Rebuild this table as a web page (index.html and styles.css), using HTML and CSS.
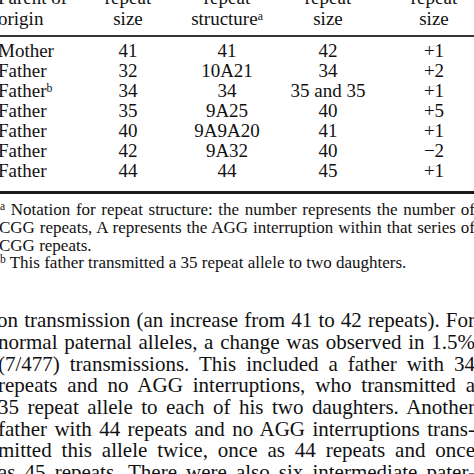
FILE: index.html
```html
<!DOCTYPE html>
<html lang="en">
<head>
<meta charset="utf-8">
<title>Table</title>
<link rel="stylesheet" href="styles.css">
</head>
<body>
<div class="page">
  <table class="data">
    <colgroup>
      <col class="c1"><col class="c2"><col class="c3"><col class="c4"><col class="c5">
    </colgroup>
    <thead>
      <tr class="h1">
        <th class="left">Parent of</th><th>repeat</th><th>repeat</th><th>repeat</th><th>repeat</th>
      </tr>
      <tr class="h2">
        <th class="left">origin</th><th>size</th><th>structure<sup>a</sup></th><th>size</th><th>size</th>
      </tr>
    </thead>
    <tbody>
      <tr class="first"><td class="left">Mother</td><td>41</td><td>41</td><td>42</td><td>+1</td></tr>
      <tr><td class="left">Father</td><td>32</td><td>10A21</td><td>34</td><td>+2</td></tr>
      <tr><td class="left">Father<sup>b</sup></td><td>34</td><td>34</td><td>35 and 35</td><td>+1</td></tr>
      <tr><td class="left">Father</td><td>35</td><td>9A25</td><td>40</td><td>+5</td></tr>
      <tr><td class="left">Father</td><td>40</td><td>9A9A20</td><td>41</td><td>+1</td></tr>
      <tr><td class="left">Father</td><td>42</td><td>9A32</td><td>40</td><td>&minus;2</td></tr>
      <tr class="last"><td class="left">Father</td><td>44</td><td>44</td><td>45</td><td>+1</td></tr>
    </tbody>
  </table>

  <div class="notes">
    <span class="jl"><sup>a</sup> Notation for repeat structure: the number represents the number of</span>
    <span class="jl">CGG repeats, A represents the AGG interruption within that series of</span>
    <span class="ln">CGG repeats.</span>
    <span class="ln"><sup>b</sup> This father transmitted a 35 repeat allele to two daughters.</span>
  </div>

  <div class="text">
    <span class="jl first-line">on transmission (an increase from 41 to 42 repeats). For</span>
    <span class="jl">normal paternal alleles, a change was observed in 1.5%</span>
    <span class="jl">(7/477) transmissions. This included a father with 34</span>
    <span class="jl">repeats and no AGG interruptions, who transmitted a</span>
    <span class="jl">35 repeat allele to each of his two daughters. Another</span>
    <span class="jl">father with 44 repeats and no AGG interruptions trans-</span>
    <span class="jl">mitted this allele twice, once as 44 repeats and once</span>
    <span class="jl">as 45 repeats. There were also six intermediate pater-</span>
  </div>
</div>
</body>
</html>
```

FILE: styles.css
```css
html, body {
  margin: 0;
  padding: 0;
  background: #ffffff;
  overflow: hidden;
}

.page {
  width: 474px;
  height: 474px;
  overflow: hidden;
  font-family: "Liberation Serif", "Times New Roman", serif;
  color: #111111;
}

.data {
  border-collapse: collapse;
  table-layout: fixed;
  width: 492px;
  margin-left: -2px;
  margin-top: -13.7px;
  font-size: 19px;
}

.c1 { width: 82px; }
.c2 { width: 96px; }
.c3 { width: 102px; }
.c4 { width: 100px; }
.c5 { width: 112px; }

.data th,
.data td {
  padding: 0;
  font-weight: normal;
  text-align: center;
  white-space: nowrap;
}

.data .left {
  text-align: left;
}

.data .h1 th {
  line-height: 23.5px;
}

.data .h2 th {
  line-height: 17.5px;
  padding-bottom: 8px;
  border-bottom: 2px solid #333333;
}

.data tbody td {
  line-height: 20px;
}

.data .first td {
  padding-top: 4px;
}

.data .last td {
  padding-bottom: 10px;
  border-bottom: 3px solid #1a1a1a;
}

sup {
  font-size: 0.62em;
  line-height: 0;
  vertical-align: 0.45em;
}

.notes {
  width: 476px;
  margin-left: -1px;
  margin-top: 7px;
  font-size: 17px;
  line-height: 17.7px;
}

.notes sup {
  margin-left: 1px;
  font-size: 0.68em;
}

.jl {
  display: block;
  text-align: justify;
  text-align-last: justify;
}

.ln {
  display: block;
  text-align: left;
}

.text {
  width: 477px;
  margin-left: -2px;
  margin-top: 38px;
  font-size: 21px;
  line-height: 21.7px;
}

.text .first-line {
  margin-left: -1px;
}
```
